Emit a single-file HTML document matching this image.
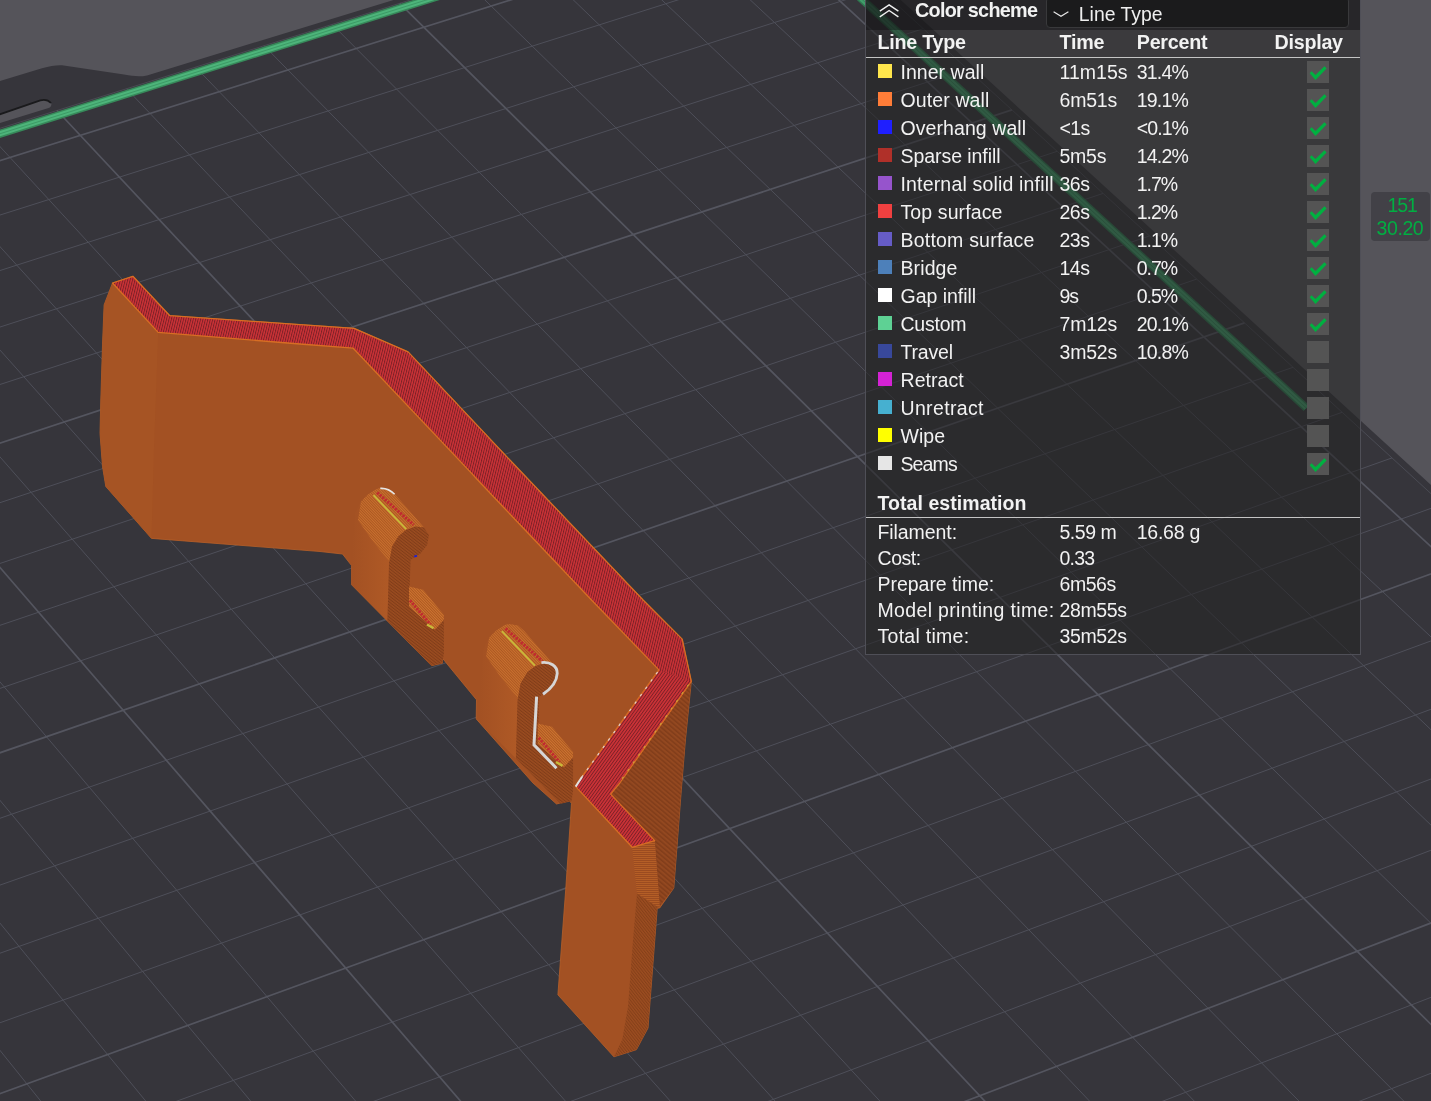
<!DOCTYPE html>
<html><head><meta charset="utf-8"><title>Preview</title>
<style>
html,body{margin:0;padding:0;background:#36353b;}
body{width:1431px;height:1101px;position:relative;overflow:hidden;font-family:"Liberation Sans",sans-serif;color:#f2f2f2;}
#panel{will-change:transform;position:absolute;left:865px;top:-1px;width:494px;height:654px;background:rgba(34,34,35,0.55);border:1px solid #4f4f57;box-sizing:content-box;}
#panel .hdr{position:absolute;left:0;top:0;width:494px;height:29.5px;background:rgba(17,17,18,0.43)}
#thbg{position:absolute;left:0;top:29.5px;width:494px;height:27.5px;background:rgba(255,255,255,0.012)}
#title{position:absolute;left:49px;top:-1px;letter-spacing:-0.72px;font-size:19.8px;font-weight:700;line-height:22px;white-space:nowrap;}
#chev{position:absolute;left:11px;top:-0.3px;}
#combo{position:absolute;left:179.5px;top:-3px;width:303.5px;height:30.5px;background:#1b1b1c;border:1px solid #39393b;border-radius:4px;box-sizing:border-box;}
#combo span{position:absolute;left:32.3px;top:5px;font-size:19.4px;line-height:22px;white-space:nowrap;color:#efefef}
#combo svg{position:absolute;left:6.7px;top:12.6px;}
.th{position:absolute;top:31px;letter-spacing:-0.25px;font-size:19.7px;font-weight:700;line-height:22px;white-space:nowrap;}
.sep{position:absolute;left:0;width:494px;height:1.2px;background:#c4c4c4;}
.row{position:absolute;left:0;width:494px;height:28px;font-size:19.5px;line-height:28px;white-space:nowrap;}
.erow{position:absolute;left:0;width:494px;height:26px;font-size:19.5px;line-height:26px;white-space:nowrap;}
.sw{position:absolute;left:12px;top:7px;width:14px;height:14px;display:block}
.c1{position:absolute;left:34.5px;top:1px}
.e1{position:absolute;left:11.5px;top:1px}
.c2{position:absolute;left:193.5px;top:1px}
.c3{position:absolute;left:270.75px;top:1px}
.cb{position:absolute;left:441px;top:4px;width:22px;height:22px;background:#545454;display:block}
.cb svg{display:block}
#tot{position:absolute;left:11.5px;top:492px;letter-spacing:0.06px;font-size:19.5px;font-weight:700;line-height:22px;white-space:nowrap}
#layer{will-change:transform;position:absolute;left:1371px;top:192px;width:59px;height:49px;background:#424147;border-radius:4px;color:#00ae42;font-size:19.5px;line-height:23px;}
#layer div{position:absolute;white-space:nowrap}
</style></head><body>
<svg width="1431" height="1101" viewBox="0 0 1431 1101" style="position:absolute;left:0;top:0">
<defs>
<pattern id="hatchR" width="2.36" height="8" patternUnits="userSpaceOnUse" patternTransform="rotate(14)"><rect width="2.36" height="8" fill="#cd3237"/><rect width="0.95" height="8" fill="#7a2127"/></pattern>
<pattern id="hatchD" width="3.5" height="8" patternUnits="userSpaceOnUse" patternTransform="rotate(-50)"><rect width="3.5" height="8" fill="#934820"/><rect width="1.5" height="8" fill="#813d1a"/></pattern>
<pattern id="hatchD2" width="4" height="2" patternUnits="userSpaceOnUse"><rect width="4" height="2" fill="#b45e26"/><rect width="4" height="0.9" fill="#98491f"/></pattern>
<pattern id="hatchT" width="1.9" height="8" patternUnits="userSpaceOnUse" patternTransform="rotate(-44)"><rect width="1.9" height="8" fill="#cf7530"/><rect width="0.8" height="8" fill="#a4521f"/></pattern>
<pattern id="hatchF" width="2.4" height="8" patternUnits="userSpaceOnUse" patternTransform="rotate(-52)"><rect width="2.4" height="8" fill="#9a4c20"/><rect width="1" height="8" fill="#813d19"/></pattern>
<linearGradient id="gSide" gradientUnits="userSpaceOnUse" x1="352" y1="0" x2="392" y2="0"><stop offset="0" stop-color="#a35123"/><stop offset="1" stop-color="#b05a26"/></linearGradient>
<pattern id="hatchR2" width="2.5" height="8" patternUnits="userSpaceOnUse" patternTransform="rotate(35.8)"><rect width="2.5" height="8" fill="#cd3237"/><rect width="0.9" height="8" fill="#7a2127"/></pattern>
<pattern id="hatchD3" width="2.3" height="8" patternUnits="userSpaceOnUse" patternTransform="rotate(-38)"><rect width="2.3" height="8" fill="#9c4d21"/><rect width="1" height="8" fill="#854019"/></pattern>
</defs>
<rect width="1431" height="1101" fill="#55545a"/>
<path d="M-5,82.6 L42,68.2 C50,65.8 56,65 62,65.2 L124,74.6 C134,76.4 140,77 147,75.4 L399.1,-1.7 L771.6,-118.1 L1824.7,844.9 L1500,1200 L-5,1200 Z" fill="#36353b"/>
<path d="M-5,124.5 L48.6,107.9 C52.5,106.6 52.6,101.5 47,100.2 C44,99.6 42,100 40.3,100.4 L-5,116 Z" fill="#55545a"/>
<path d="M-5,116 L40.3,100.4 C44,99.4 48,99.8 51,103" fill="none" stroke="#1a1a1c" stroke-width="1.8"/>
<path d="M-20.1,134.6L769.3,-112.3L2044.2,1055.2" stroke="#4c4d56" stroke-width="0.9" fill="none"/>
<path d="M-989.4,529.0L836.8,-50.5M-955.4,576.5L879.7,-11.2M-920.8,624.6L923.2,28.7M-885.8,673.4L967.3,69.0M-814.2,773.3L1057.2,151.3M-777.6,824.3L1103.1,193.4M-740.4,876.1L1149.6,235.9M-702.6,928.7L1196.7,279.1M-625.4,1036.4L1293.0,367.3M-585.9,1091.5L1342.1,412.3M-545.8,1147.4L1392.0,457.9M-505.0,1204.3L1442.5,504.2M-421.5,1320.7L1545.8,598.8M-378.7,1380.3L1598.6,647.1M-335.2,1440.9L1652.2,696.1M-291.0,1502.5L1706.5,745.9M-200.4,1628.8L1817.6,847.7M-154.0,1693.5L1874.5,899.7M-106.7,1759.4L1932.2,952.5M-58.7,1826.4L1990.7,1006.2M-972.8,432.6L66.3,1854.9M-895.6,408.5L155.6,1818.8M-819.0,384.5L244.1,1783.0M-742.9,360.7L331.7,1747.6M-592.5,313.7L504.5,1677.7M-518.2,290.4L589.7,1643.2M-444.4,267.3L674.2,1609.1M-371.2,244.4L757.9,1575.3M-226.3,199.1L923.0,1508.5M-154.7,176.7L1004.5,1475.6M-83.6,154.5L1085.2,1442.9M-13.1,132.4L1165.2,1410.6M126.5,88.7L1323.2,1346.7M195.6,67.2L1401.1,1315.2M264.1,45.7L1478.4,1284.0M332.2,24.4L1555.0,1253.0M466.8,-17.7L1706.2,1191.9M533.4,-38.5L1780.8,1161.7M599.5,-59.2L1854.8,1131.8M665.2,-79.7L1928.1,1102.1" stroke="#4e4f59" stroke-width="1" fill="none"/>
<path d="M-1022.9,482.3L794.4,-89.3M-850.3,723.0L1011.9,109.9M-664.3,982.2L1244.5,322.9M-463.6,1262.0L1493.8,551.1M-246.1,1565.1L1761.7,796.4M-667.4,337.1L418.5,1712.5M-298.5,221.7L840.8,1541.7M57.0,110.5L1244.6,1378.5M399.7,3.3L1630.9,1222.3M730.4,-100.1L2000.9,1072.7" stroke="#54555f" stroke-width="1.7" fill="none"/>
<path d="M-5.0,135.3L440.0,-4.3" stroke="#37895a" stroke-width="8" fill="none"/>
<path d="M-5.0,135.3L440.0,-4.3" stroke="#4db47a" stroke-width="5" fill="none"/>
<path d="M-5.0,135.3L440.0,-4.3" stroke="#3d9a66" stroke-width="1" fill="none"/>
<path d="M849.5,-12.2L1306.3,408.0" stroke="#2f7850" stroke-width="8" fill="none"/>
<path d="M849.5,-12.2L1306.3,408.0" stroke="#419e6b" stroke-width="5" fill="none"/>
<path d="M849.5,-12.2L1306.3,408.0" stroke="#35875a" stroke-width="1" fill="none"/>
<polygon points="112.5,283.0 132.9,276.3 169.8,315.7 300.0,324.6 354.0,328.3 408.1,351.9 509.9,460.0 643.1,600.0 682.2,639.1 691.3,681.5 685.4,740.0 681.3,789.9 673.8,888.0 659.7,908.0 657.2,908.3 648.0,1028.0 636.4,1049.7 613.9,1056.8 557.9,994.8 563.2,923.0 565.7,890.0 571.5,803.2 569.0,800.7 556.5,804.0 533.0,783.0 476.2,718.9 476.5,699.8 442.4,658.2 442.4,663.2 431.6,665.7 351.6,584.8 351.6,565.6 342.5,554.0 320.0,551.5 151.5,538.4 105.8,486.5 102.5,466.5 100.0,433.3 100.8,400.0 102.5,344.8 104.1,304.9" fill="#a35123" stroke="#b85f28" stroke-width="0.8"/>
<polygon points="112.5,283.0 158.2,332.4 154.0,448.0 151.5,538.4 105.8,486.5 102.5,466.5 100.0,433.3 100.8,400.0 102.5,344.8 104.1,304.9" fill="#a65424" />
<polygon points="691.3,681.5 619.8,783.0 610.6,794.1 654.7,840.6 659.7,906.3 673.8,888.0 681.3,789.9 685.4,740.0" fill="url(#hatchD)" />
<polygon points="632.2,847.3 654.7,840.6 659.7,906.3 657.5,907.0 637.0,893.5" fill="url(#hatchD2)" />
<polygon points="637.0,893.5 657.5,907.0 657.2,908.3 648.0,1028.0 636.4,1049.7 613.9,1056.8 622.2,1039.7 628.0,1006.4 633.0,939.9" fill="url(#hatchD3)" />
<polygon points="112.5,283.0 132.9,276.3 169.8,315.7 300.0,324.6 354.0,328.3 408.1,351.9 509.9,460.0 643.1,600.0 682.2,639.1 691.3,681.5 619.8,783.0 610.6,794.1 654.7,840.6 632.2,847.3 575.7,786.6 577.4,783.0 658.9,669.9 591.5,600.0 480.5,483.0 470.0,471.6 353.2,348.2 300.0,344.0 158.2,332.4" fill="url(#hatchR)" />
<polygon points="658.9,669.9 691.3,681.5 619.8,783.0 610.6,794.1 654.7,840.6 632.2,847.3 575.7,786.6 577.4,783.0" fill="url(#hatchR2)" />
<polygon points="112.5,283.0 132.9,276.3 169.8,315.7 300.0,324.6 354.0,328.3 408.1,351.9 509.9,460.0 643.1,600.0 682.2,639.1 691.3,681.5 619.8,783.0 610.6,794.1 654.7,840.6 632.2,847.3 575.7,786.6 577.4,783.0 658.9,669.9 591.5,600.0 480.5,483.0 470.0,471.6 353.2,348.2 300.0,344.0 158.2,332.4" fill="none" stroke="#d76e23" stroke-width="1.3" stroke-linejoin="round"/>
<g><polygon points="355.0,513.2 361.0,501.5 367.7,494.8 376.0,489.3 380.3,488.0 389.5,489.7 395.3,494.8 423.9,527.5 415.5,526.6 406.0,530.0 398.7,535.9 392.0,546.8 389.5,561.9 387.4,621.0 351.6,584.8 351.6,565.6 353.3,536.5" fill="url(#gSide)" /><polygon points="361.0,501.5 367.7,494.8 376.0,489.3 380.3,488.0 389.5,489.7 395.3,494.8 423.9,527.5 415.5,526.6 406.0,530.0 398.7,535.9 392.0,546.8 389.5,561.9 372.0,540.0 358.0,520.0" fill="url(#hatchT)" opacity="0.85"/><polygon points="398.7,535.9 406.0,530.0 415.5,526.6 423.9,527.5 428.9,535.0 427.2,545.0 420.5,553.5 411.3,559.3 410.6,559.8 409.0,606.4 434.8,629.7 443.9,619.7 443.9,653.0 442.4,663.2 431.6,665.7 387.4,621.0 389.0,563.1 391.5,549.8 392.0,546.8" fill="url(#hatchF)" /><polygon points="409.0,586.4 423.1,589.7 443.9,614.7 443.9,619.7 434.8,629.7 409.0,606.4" fill="url(#hatchT)" /><path d="M373.5,495.2 L406.2,529.2" stroke="#c9b93a" stroke-width="1.8" fill="none"/><path d="M377.2,492.6 L413.6,524.8" stroke="#c12a30" stroke-width="3.2" stroke-dasharray="2.2 1.2" fill="none"/><path d="M410,600.5 L430.5,624.5" stroke="#c12a30" stroke-width="3" stroke-dasharray="2.2 1.2" fill="none"/><path d="M427,624.5 L433.5,628.3" stroke="#c9b93a" stroke-width="2.4" fill="none"/><path d="M414.2,556.6 L417,555.8" stroke="#2222cc" stroke-width="2" fill="none"/></g>
<g transform="translate(128.4,135.9) translate(380,488) scale(1.012) translate(-380,-488)"><polygon points="355.0,513.2 361.0,501.5 367.7,494.8 376.0,489.3 380.3,488.0 389.5,489.7 395.3,494.8 423.9,527.5 415.5,526.6 406.0,530.0 398.7,535.9 392.0,546.8 389.5,561.9 387.4,621.0 351.6,584.8 351.6,565.6 353.3,536.5" fill="url(#gSide)" /><polygon points="361.0,501.5 367.7,494.8 376.0,489.3 380.3,488.0 389.5,489.7 395.3,494.8 423.9,527.5 415.5,526.6 406.0,530.0 398.7,535.9 392.0,546.8 389.5,561.9 372.0,540.0 358.0,520.0" fill="url(#hatchT)" opacity="0.85"/><polygon points="398.7,535.9 406.0,530.0 415.5,526.6 423.9,527.5 428.9,535.0 427.2,545.0 420.5,553.5 411.3,559.3 410.6,559.8 409.0,606.4 434.8,629.7 443.9,619.7 443.9,653.0 442.4,663.2 431.6,665.7 387.4,621.0 389.0,563.1 391.5,549.8 392.0,546.8" fill="url(#hatchF)" /><polygon points="409.0,586.4 423.1,589.7 443.9,614.7 443.9,619.7 434.8,629.7 409.0,606.4" fill="url(#hatchT)" /><path d="M373.5,495.2 L406.2,529.2" stroke="#c9b93a" stroke-width="1.8" fill="none"/><path d="M377.2,492.6 L413.6,524.8" stroke="#c12a30" stroke-width="3.2" stroke-dasharray="2.2 1.2" fill="none"/><path d="M410,600.5 L430.5,624.5" stroke="#c12a30" stroke-width="3" stroke-dasharray="2.2 1.2" fill="none"/><path d="M427,624.5 L433.5,628.3" stroke="#c9b93a" stroke-width="2.4" fill="none"/><path d="M414.2,556.6 L417,555.8" stroke="#2222cc" stroke-width="2" fill="none"/></g>
<path d="M380.3,488.4 C386,488 391,490.5 394.6,494.2" stroke="#e6e6e6" stroke-width="1.6" fill="none"/>
<path d="M541.4,662.6 C550,661.5 557.5,666 557.2,673.5 C556.8,682 550,689.5 543,694.2" stroke="#d6d6d6" stroke-width="2.9" fill="none"/>
<path d="M536.6,696.6 L534,744.9 L556.5,768.2" stroke="#d6d6d6" stroke-width="3" fill="none" stroke-linejoin="miter"/>
<path d="M657.6,672 L577.6,783" stroke="#dddddd" stroke-width="1.2" stroke-dasharray="2.6 6.5" opacity="0.9" fill="none"/>
<path d="M688.5,684.5 L620.5,781" stroke="#c9b93a" stroke-width="1.1" stroke-dasharray="2.4 7" opacity="0.8" fill="none"/>
<path d="M575.7,786.6 L582,777" stroke="#e0e0e0" stroke-width="2" fill="none"/>
</svg>
<div id="panel">
 <div class="hdr">
  <svg id="chev" width="24" height="20" viewBox="0 0 24 20"><path d="M2.8,11.2 L12.1,4.8 L21.4,11.2 M2.8,16.9 L12.1,10.5 L21.4,16.9" fill="none" stroke="#f0f0f0" stroke-width="1.4"/></svg>
  <div id="title">Color scheme</div>
  <div id="combo"><svg width="16" height="7" viewBox="0 0 16 7"><path d="M0.6,0.8 L8,5.3 L15.4,0.8" fill="none" stroke="#e8e8e8" stroke-width="1.2"/></svg><span>Line Type</span></div>
 </div>
 <div id="thbg"></div>
 <div class="th" style="left:11.5px">Line Type</div><div class="th" style="left:193.5px">Time</div><div class="th" style="left:270.75px">Percent</div><div class="th" style="left:408.5px">Display</div>
 <div class="sep" style="top:57px"></div>
 <div class="row" style="top:57px"><i class="sw" style="background:#FFE64C"></i><span class="c1" style="letter-spacing:0.03px">Inner wall</span><span class="c2" style="letter-spacing:0.02px">11m15s</span><span class="c3" style="letter-spacing:-0.81px">31.4%</span><span class="cb"><svg viewBox="0 0 22 22" width="22" height="22"><polygon points="2.7,12.3 4.6,10.2 8.5,14 17.4,5.2 19.6,7.5 8.5,18.9" fill="#00b040"/></svg></span></div><div class="row" style="top:85px"><i class="sw" style="background:#FF7D38"></i><span class="c1" style="letter-spacing:0.12px">Outer wall</span><span class="c2" style="letter-spacing:-0.20px">6m51s</span><span class="c3" style="letter-spacing:-0.81px">19.1%</span><span class="cb"><svg viewBox="0 0 22 22" width="22" height="22"><polygon points="2.7,12.3 4.6,10.2 8.5,14 17.4,5.2 19.6,7.5 8.5,18.9" fill="#00b040"/></svg></span></div><div class="row" style="top:113px"><i class="sw" style="background:#1F1FFF"></i><span class="c1" style="letter-spacing:0.08px">Overhang wall</span><span class="c2" style="letter-spacing:-0.67px">&lt;1s</span><span class="c3" style="letter-spacing:-0.91px">&lt;0.1%</span><span class="cb"><svg viewBox="0 0 22 22" width="22" height="22"><polygon points="2.7,12.3 4.6,10.2 8.5,14 17.4,5.2 19.6,7.5 8.5,18.9" fill="#00b040"/></svg></span></div><div class="row" style="top:141px"><i class="sw" style="background:#B03029"></i><span class="c1" style="letter-spacing:-0.06px">Sparse infill</span><span class="c2" style="letter-spacing:-0.24px">5m5s</span><span class="c3" style="letter-spacing:-0.81px">14.2%</span><span class="cb"><svg viewBox="0 0 22 22" width="22" height="22"><polygon points="2.7,12.3 4.6,10.2 8.5,14 17.4,5.2 19.6,7.5 8.5,18.9" fill="#00b040"/></svg></span></div><div class="row" style="top:169px"><i class="sw" style="background:#9654CC"></i><span class="c1" style="letter-spacing:0.17px">Internal solid infill</span><span class="c2" style="letter-spacing:-0.50px">36s</span><span class="c3" style="letter-spacing:-1.06px">1.7%</span><span class="cb"><svg viewBox="0 0 22 22" width="22" height="22"><polygon points="2.7,12.3 4.6,10.2 8.5,14 17.4,5.2 19.6,7.5 8.5,18.9" fill="#00b040"/></svg></span></div><div class="row" style="top:197px"><i class="sw" style="background:#F04040"></i><span class="c1" style="letter-spacing:0.11px">Top surface</span><span class="c2" style="letter-spacing:-0.50px">26s</span><span class="c3" style="letter-spacing:-1.06px">1.2%</span><span class="cb"><svg viewBox="0 0 22 22" width="22" height="22"><polygon points="2.7,12.3 4.6,10.2 8.5,14 17.4,5.2 19.6,7.5 8.5,18.9" fill="#00b040"/></svg></span></div><div class="row" style="top:225px"><i class="sw" style="background:#665CC7"></i><span class="c1" style="letter-spacing:0.21px">Bottom surface</span><span class="c2" style="letter-spacing:-0.50px">23s</span><span class="c3" style="letter-spacing:-1.06px">1.1%</span><span class="cb"><svg viewBox="0 0 22 22" width="22" height="22"><polygon points="2.7,12.3 4.6,10.2 8.5,14 17.4,5.2 19.6,7.5 8.5,18.9" fill="#00b040"/></svg></span></div><div class="row" style="top:253px"><i class="sw" style="background:#4D80BA"></i><span class="c1" style="letter-spacing:0.10px">Bridge</span><span class="c2" style="letter-spacing:-0.50px">14s</span><span class="c3" style="letter-spacing:-1.06px">0.7%</span><span class="cb"><svg viewBox="0 0 22 22" width="22" height="22"><polygon points="2.7,12.3 4.6,10.2 8.5,14 17.4,5.2 19.6,7.5 8.5,18.9" fill="#00b040"/></svg></span></div><div class="row" style="top:281px"><i class="sw" style="background:#FFFFFF"></i><span class="c1" style="letter-spacing:-0.02px">Gap infill</span><span class="c2" style="letter-spacing:-1.05px">9s</span><span class="c3" style="letter-spacing:-1.06px">0.5%</span><span class="cb"><svg viewBox="0 0 22 22" width="22" height="22"><polygon points="2.7,12.3 4.6,10.2 8.5,14 17.4,5.2 19.6,7.5 8.5,18.9" fill="#00b040"/></svg></span></div><div class="row" style="top:309px"><i class="sw" style="background:#5ED194"></i><span class="c1" style="letter-spacing:-0.24px">Custom</span><span class="c2" style="letter-spacing:-0.20px">7m12s</span><span class="c3" style="letter-spacing:-0.81px">20.1%</span><span class="cb"><svg viewBox="0 0 22 22" width="22" height="22"><polygon points="2.7,12.3 4.6,10.2 8.5,14 17.4,5.2 19.6,7.5 8.5,18.9" fill="#00b040"/></svg></span></div><div class="row" style="top:337px"><i class="sw" style="background:#38489B"></i><span class="c1" style="letter-spacing:-0.17px">Travel</span><span class="c2" style="letter-spacing:-0.20px">3m52s</span><span class="c3" style="letter-spacing:-0.81px">10.8%</span><span class="cb"></span></div><div class="row" style="top:365px"><i class="sw" style="background:#D422D4"></i><span class="c1" style="letter-spacing:0.05px">Retract</span><span class="c2"></span><span class="c3"></span><span class="cb"></span></div><div class="row" style="top:393px"><i class="sw" style="background:#46B0D0"></i><span class="c1" style="letter-spacing:0.34px">Unretract</span><span class="c2"></span><span class="c3"></span><span class="cb"></span></div><div class="row" style="top:421px"><i class="sw" style="background:#FFFF00"></i><span class="c1" style="letter-spacing:0.03px">Wipe</span><span class="c2"></span><span class="c3"></span><span class="cb"></span></div><div class="row" style="top:449px"><i class="sw" style="background:#E6E6E6"></i><span class="c1" style="letter-spacing:-0.89px">Seams</span><span class="c2"></span><span class="c3"></span><span class="cb"><svg viewBox="0 0 22 22" width="22" height="22"><polygon points="2.7,12.3 4.6,10.2 8.5,14 17.4,5.2 19.6,7.5 8.5,18.9" fill="#00b040"/></svg></span></div>
 <div id="tot">Total estimation</div>
 <div class="sep" style="top:517px"></div>
 <div class="erow" style="top:518px"><span class="e1" style="letter-spacing:-0.08px">Filament:</span><span class="c2" style="letter-spacing:-0.48px">5.59 m</span><span class="c3" style="letter-spacing:-0.26px">16.68 g</span></div><div class="erow" style="top:544px"><span class="e1" style="letter-spacing:-0.45px">Cost:</span><span class="c2" style="letter-spacing:-0.75px">0.33</span><span class="c3"></span></div><div class="erow" style="top:570px"><span class="e1" style="letter-spacing:-0.03px">Prepare time:</span><span class="c2" style="letter-spacing:-0.45px">6m56s</span><span class="c3"></span></div><div class="erow" style="top:596px"><span class="e1" style="letter-spacing:0.34px">Model printing time:</span><span class="c2" style="letter-spacing:-0.36px">28m55s</span><span class="c3"></span></div><div class="erow" style="top:622px"><span class="e1" style="letter-spacing:0.28px">Total time:</span><span class="c2" style="letter-spacing:-0.36px">35m52s</span><span class="c3"></span></div>
</div>
<div id="layer"><div style="left:16.5px;top:2px;letter-spacing:-1.1px">151</div><div style="left:5.5px;top:24.5px;letter-spacing:-0.4px">30.20</div></div>
</body></html>
